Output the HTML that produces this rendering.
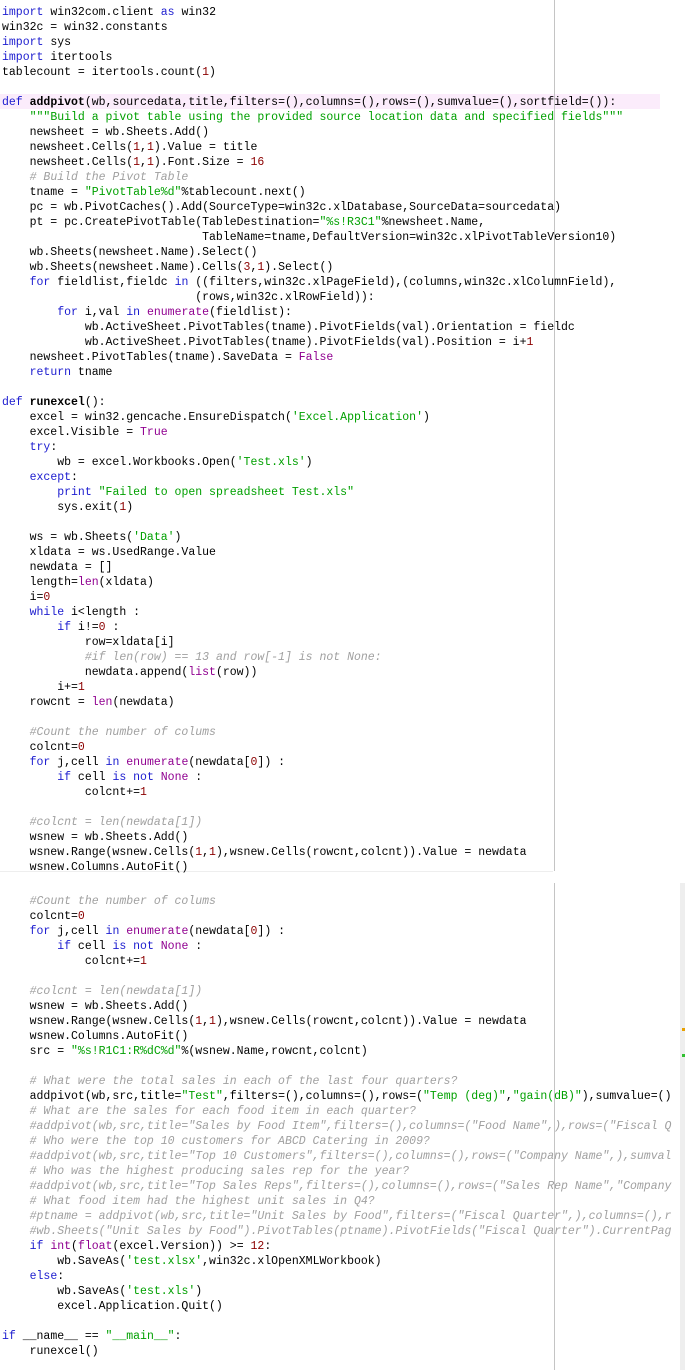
<!DOCTYPE html>
<html><head><meta charset="utf-8"><style>
html,body{margin:0;padding:0;background:#fff;width:685px;height:1370px;overflow:hidden;position:relative}
pre{position:absolute;left:2px;margin:0;font-family:"Liberation Mono","DejaVu Sans Mono",monospace;font-size:11.5px;line-height:15px;color:#000;white-space:pre}
.k{color:#1c1ccf}.b{color:#900090}.s{color:#00a000}.n{color:#8b0000}.c{color:#a0a0a0;font-style:italic}.f{font-weight:bold}
.vl{position:absolute;left:554px;width:1px;background:#c4c4c4}
</style></head><body>
<div style="position:absolute;left:0;top:94px;width:660px;height:15px;background:#fbecfb"></div>
<div class="vl" style="top:0;height:871px"></div>
<div style="position:absolute;left:0;top:871px;width:553px;height:1px;background:#eee"></div>
<div class="vl" style="top:883px;height:487px"></div>
<div style="position:absolute;left:680px;top:883px;width:5px;height:487px;background:#eee"></div>
<div style="position:absolute;left:682px;top:1028px;width:3px;height:3px;background:#e8a000"></div>
<div style="position:absolute;left:682px;top:1054px;width:3px;height:3px;background:#30c030"></div>
<pre style="top:5px"><span class="k">import</span> win32com.client <span class="k">as</span> win32
win32c = win32.constants
<span class="k">import</span> sys
<span class="k">import</span> itertools
tablecount = itertools.count(<span class="n">1</span>)

<span class="k">def</span> <span class="f">addpivot</span>(wb,sourcedata,title,filters=(),columns=(),rows=(),sumvalue=(),sortfield=()):
    <span class="s">"""Build a pivot table using the provided source location data and specified fields"""</span>
    newsheet = wb.Sheets.Add()
    newsheet.Cells(<span class="n">1</span>,<span class="n">1</span>).Value = title
    newsheet.Cells(<span class="n">1</span>,<span class="n">1</span>).Font.Size = <span class="n">16</span>
    <span class="c"># Build the Pivot Table</span>
    tname = <span class="s">"PivotTable%d"</span>%tablecount.next()
    pc = wb.PivotCaches().Add(SourceType=win32c.xlDatabase,SourceData=sourcedata)
    pt = pc.CreatePivotTable(TableDestination=<span class="s">"%s!R3C1"</span>%newsheet.Name,
                             TableName=tname,DefaultVersion=win32c.xlPivotTableVersion10)
    wb.Sheets(newsheet.Name).Select()
    wb.Sheets(newsheet.Name).Cells(<span class="n">3</span>,<span class="n">1</span>).Select()
    <span class="k">for</span> fieldlist,fieldc <span class="k">in</span> ((filters,win32c.xlPageField),(columns,win32c.xlColumnField),
                            (rows,win32c.xlRowField)):
        <span class="k">for</span> i,val <span class="k">in</span> <span class="b">enumerate</span>(fieldlist):
            wb.ActiveSheet.PivotTables(tname).PivotFields(val).Orientation = fieldc
            wb.ActiveSheet.PivotTables(tname).PivotFields(val).Position = i+<span class="n">1</span>
    newsheet.PivotTables(tname).SaveData = <span class="b">False</span>
    <span class="k">return</span> tname

<span class="k">def</span> <span class="f">runexcel</span>():
    excel = win32.gencache.EnsureDispatch(<span class="s">'Excel.Application'</span>)
    excel.Visible = <span class="b">True</span>
    <span class="k">try</span>:
        wb = excel.Workbooks.Open(<span class="s">'Test.xls'</span>)
    <span class="k">except</span>:
        <span class="k">print</span> <span class="s">"Failed to open spreadsheet Test.xls"</span>
        sys.exit(<span class="n">1</span>)

    ws = wb.Sheets(<span class="s">'Data'</span>)
    xldata = ws.UsedRange.Value
    newdata = []
    length=<span class="b">len</span>(xldata)
    i=<span class="n">0</span>
    <span class="k">while</span> i&lt;length :
        <span class="k">if</span> i!=<span class="n">0</span> :
            row=xldata[i]
            <span class="c">#if len(row) == 13 and row[-1] is not None:</span>
            newdata.append(<span class="b">list</span>(row))
        i+=<span class="n">1</span>
    rowcnt = <span class="b">len</span>(newdata)

    <span class="c">#Count the number of colums</span>
    colcnt=<span class="n">0</span>
    <span class="k">for</span> j,cell <span class="k">in</span> <span class="b">enumerate</span>(newdata[<span class="n">0</span>]) :
        <span class="k">if</span> cell <span class="k">is not</span> <span class="b">None</span> :
            colcnt+=<span class="n">1</span>

    <span class="c">#colcnt = len(newdata[1])</span>
    wsnew = wb.Sheets.Add()
    wsnew.Range(wsnew.Cells(<span class="n">1</span>,<span class="n">1</span>),wsnew.Cells(rowcnt,colcnt)).Value = newdata
    wsnew.Columns.AutoFit()</pre>
<pre style="top:894px">    <span class="c">#Count the number of colums</span>
    colcnt=<span class="n">0</span>
    <span class="k">for</span> j,cell <span class="k">in</span> <span class="b">enumerate</span>(newdata[<span class="n">0</span>]) :
        <span class="k">if</span> cell <span class="k">is not</span> <span class="b">None</span> :
            colcnt+=<span class="n">1</span>

    <span class="c">#colcnt = len(newdata[1])</span>
    wsnew = wb.Sheets.Add()
    wsnew.Range(wsnew.Cells(<span class="n">1</span>,<span class="n">1</span>),wsnew.Cells(rowcnt,colcnt)).Value = newdata
    wsnew.Columns.AutoFit()
    src = <span class="s">"%s!R1C1:R%dC%d"</span>%(wsnew.Name,rowcnt,colcnt)

    <span class="c"># What were the total sales in each of the last four quarters?</span>
    addpivot(wb,src,title=<span class="s">"Test"</span>,filters=(),columns=(),rows=(<span class="s">"Temp (deg)"</span>,<span class="s">"gain(dB)"</span>),sumvalue=()
    <span class="c"># What are the sales for each food item in each quarter?</span>
    <span class="c">#addpivot(wb,src,title="Sales by Food Item",filters=(),columns=("Food Name",),rows=("Fiscal Q</span>
    <span class="c"># Who were the top 10 customers for ABCD Catering in 2009?</span>
    <span class="c">#addpivot(wb,src,title="Top 10 Customers",filters=(),columns=(),rows=("Company Name",),sumval</span>
    <span class="c"># Who was the highest producing sales rep for the year?</span>
    <span class="c">#addpivot(wb,src,title="Top Sales Reps",filters=(),columns=(),rows=("Sales Rep Name","Company</span>
    <span class="c"># What food item had the highest unit sales in Q4?</span>
    <span class="c">#ptname = addpivot(wb,src,title="Unit Sales by Food",filters=("Fiscal Quarter",),columns=(),r</span>
    <span class="c">#wb.Sheets("Unit Sales by Food").PivotTables(ptname).PivotFields("Fiscal Quarter").CurrentPag</span>
    <span class="k">if</span> <span class="b">int</span>(<span class="b">float</span>(excel.Version)) &gt;= <span class="n">12</span>:
        wb.SaveAs(<span class="s">'test.xlsx'</span>,win32c.xlOpenXMLWorkbook)
    <span class="k">else</span>:
        wb.SaveAs(<span class="s">'test.xls'</span>)
        excel.Application.Quit()

<span class="k">if</span> __name__ == <span class="s">"__main__"</span>:
    runexcel()</pre>
</body></html>
